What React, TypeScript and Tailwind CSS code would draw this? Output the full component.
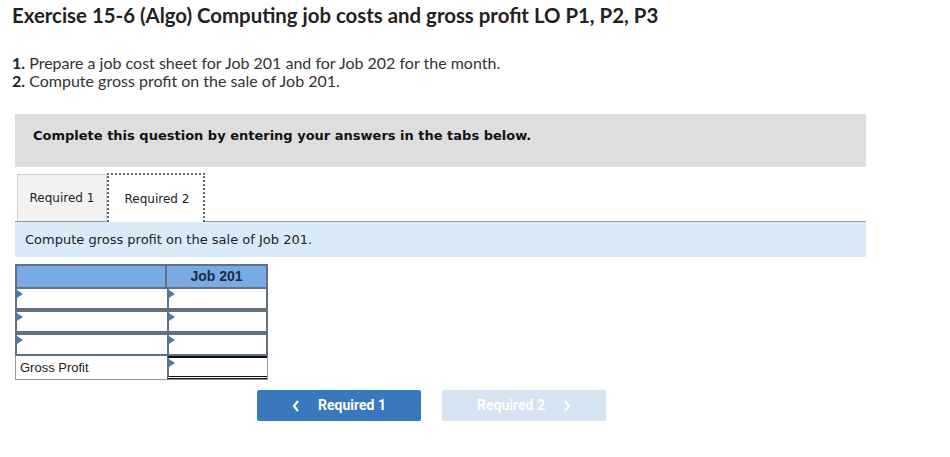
import React from "react";

const Tri = () => (
  <span className="absolute left-0 top-[1px] w-0 h-0 border-y-[4px] border-y-transparent border-l-[6px] border-l-[#4a7ebb]" />
);

function InputRow() {
  return (
    <div className="flex h-[23px]">
      <div className="relative w-[152px] border-2 border-[#5f7183] bg-white border-r-0">
        <Tri />
      </div>
      <div className="w-[2px] bg-[#5f7183]" />
      <div className="relative w-[99px] border-2 border-[#5f7183] bg-white border-l-0">
        <Tri />
      </div>
    </div>
  );
}

export default function App() {
  return (
    <div className="w-[950px] h-[457px] bg-white text-[#222] relative">
      <div className="pl-[12px] pt-[3px]">
        <h1 className="text-[20.4px] leading-[24px] font-bold text-[#222]" style={{ fontFamily: "Lato, sans-serif" }}>
          Exercise 15-6 (Algo) Computing job costs and gross profit LO P1, P2, P3
        </h1>
        <div className="mt-[27px] text-[16px] leading-[18px] text-[#333]" style={{ fontFamily: "Lato, sans-serif" }}>
          <p><b className="text-[#222]">1.</b> Prepare a job cost sheet for Job 201 and for Job 202 for the month.</p>
          <p><b className="text-[#222]">2.</b> Compute gross profit on the sale of Job 201.</p>
        </div>
      </div>

      <div className="ml-[15px] w-[851px]">
        <div className="mt-[24px] h-[53px] bg-[#dedede] pt-[14px] pl-[18px]">
          <span className="block text-[13px] leading-[16px] font-bold text-[#111]" style={{ fontFamily: "'DejaVu Sans', Verdana, sans-serif" }}>
            Complete this question by entering your answers in the tabs below.
          </span>
        </div>

        <div className="mt-[6px] flex items-end h-[49px] border-b border-[#999] pl-[2px]" style={{ fontFamily: "'DejaVu Sans', Verdana, sans-serif" }}>
          <div className="w-[90px] h-[47px] bg-[#f2f2f2] border border-[#cfcfcf] border-b-0 flex items-center justify-center text-[12px] text-[#222]">
            Required 1
          </div>
          <div className="w-[98px] h-[49px] bg-white border-2 border-dotted border-[#5a6a80] border-b-0 flex items-center justify-center pl-[2px] text-[12px] text-[#222] mb-[-1px]">
            Required 2
          </div>
        </div>

        <div className="h-[35px] bg-[#daeaf8] flex items-center pl-[10px] text-[13px] text-[#222]" style={{ fontFamily: "'DejaVu Sans', Verdana, sans-serif" }}>
          Compute gross profit on the sale of Job 201.
        </div>

        <div className="mt-[7px] w-[253px]" style={{ fontFamily: "'Liberation Sans', Arial, sans-serif" }}>
          <div className="flex h-[23px] bg-[#7aaae3] border-2 border-b-0 border-[#5f7183]">
            <div className="w-[150px] border-r-2 border-[#5f7183]" />
            <div className="flex-1 flex items-center justify-center text-[14px] font-bold text-[#1a2a44]">Job 201</div>
          </div>
          <InputRow />
          <InputRow />
          <InputRow />
          <div className="flex h-[24px] border border-[#999] border-t-0">
            <div className="w-[151px] flex items-center pl-[4px] text-[13px] text-[#222]">Gross Profit</div>
            <div className="relative flex-1 border-l-2 border-[#5f7183] border-t-2 border-t-[#111] border-b-[3px] border-b-[#111] border-double bg-white">
              <Tri />
            </div>
          </div>
        </div>
      </div>

      <div className="absolute left-[257px] top-[390px] flex gap-[21px]" style={{ fontFamily: "Roboto, sans-serif" }}>
        <div className="w-[164px] h-[31px] rounded-[2px] bg-[#3a78be] flex items-center justify-center gap-[18px] text-white text-[14px] font-bold">
          <svg width="8" height="12" viewBox="0 0 8 12"><path d="M6 1 L2 6 L6 11" stroke="white" strokeWidth="2.2" fill="none" /></svg>
          <span>Required 1</span>
        </div>
        <div className="w-[164px] h-[31px] rounded-[2px] bg-[#d6e3f3] flex items-center justify-center gap-[18px] text-white text-[14px] font-bold">
          <span>Required 2</span>
          <svg width="8" height="12" viewBox="0 0 8 12"><path d="M2 1 L6 6 L2 11" stroke="white" strokeWidth="2.2" fill="none" /></svg>
        </div>
      </div>
    </div>
  );
}
